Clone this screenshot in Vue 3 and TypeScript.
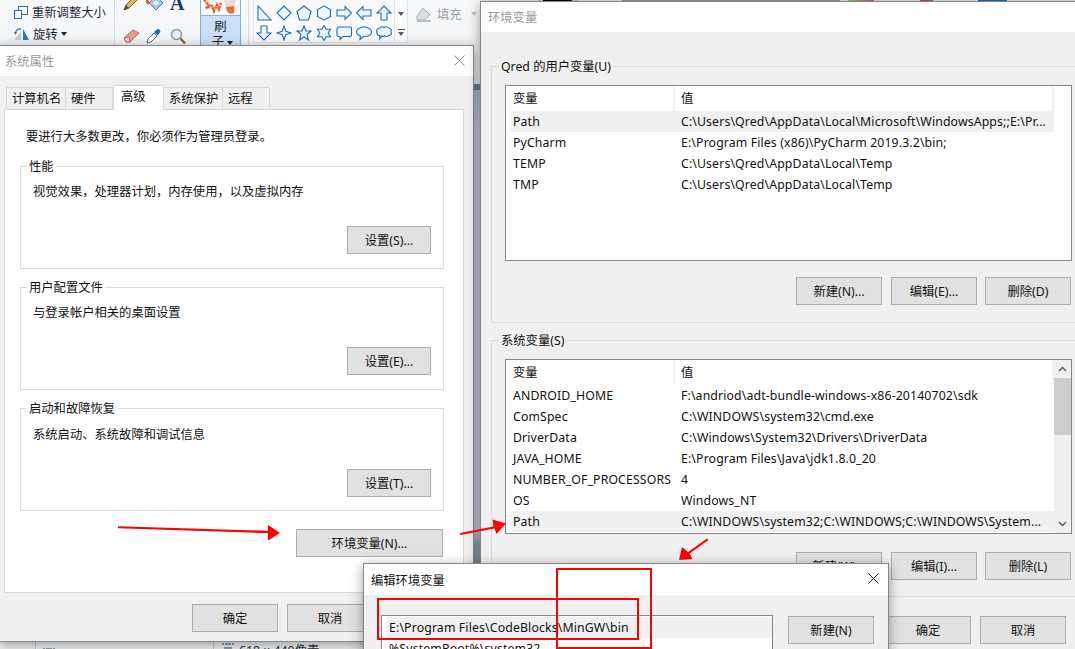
<script setup lang="ts">
interface EnvRow { name: string; value: string; selected?: boolean }

const shapes: string[] = [
  'M2 1L2 15L15 15Z',
  'M8 1L15 8L8 15L1 8Z',
  'M8 1L15 6.5L12.5 15L3.5 15L1 6.5Z',
  'M8 1L14.5 4.5V11.5L8 15L1.5 11.5V4.5Z',
  'M1 5H9V1.5L15.5 8L9 14.5V11H1Z',
  'M15 5H7V1.5L.5 8L7 14.5V11H15Z',
  'M8 1L15 8H11V15H5V8H1Z',
  'M5 1H11V8H15L8 15L1 8H5Z',
  'M8 1L9.8 6.2L15 8L9.8 9.8L8 15L6.2 9.8L1 8L6.2 6.2Z',
  'M8 1L9.9 6H15L11 9.3L12.5 15L8 11.7L3.5 15L5 9.3L1 6H6.1Z',
  'M8 .5L10.1 4.3H14.5L12.2 8L14.5 11.7H10.1L8 15.5L5.9 11.7H1.5L3.8 8L1.5 4.3H5.9Z',
  'M2.5 2H14Q15.5 2 15.5 3.5V10Q15.5 11.5 14 11.5H7L4 14.5V11.5H2.5Q1 11.5 1 10V3.5Q1 2 2.5 2Z',
  'M8 2C12 2 15.5 4 15.5 7C15.5 10 12 11.5 8 11.5H7.5L4 14.5L4.5 11C2.5 10.3 .5 9 .5 7C.5 4 4 2 8 2Z',
  'M4 3C5 1.5 7 1.5 8 2.5C9.5 1.5 11.5 1.5 12.5 3C14.5 3 15.8 5 15 6.8C16 8.5 14.8 10.5 12.8 10.3C11.8 11.7 9.8 11.8 8.8 10.8C7.8 11.6 6.5 11.6 5.8 11L3.8 14L4 10.6C2 10.8 .3 9 1 7C0 5 1.8 3 4 3Z',
]

const userRows: EnvRow[] = [
  { name: 'Path', value: 'C:\\Users\\Qred\\AppData\\Local\\Microsoft\\WindowsApps;;E:\\Pr...', selected: true },
  { name: 'PyCharm', value: 'E:\\Program Files (x86)\\PyCharm 2019.3.2\\bin;' },
  { name: 'TEMP', value: 'C:\\Users\\Qred\\AppData\\Local\\Temp' },
  { name: 'TMP', value: 'C:\\Users\\Qred\\AppData\\Local\\Temp' },
]

const systemRows: EnvRow[] = [
  { name: 'ANDROID_HOME', value: 'F:\\andriod\\adt-bundle-windows-x86-20140702\\sdk' },
  { name: 'ComSpec', value: 'C:\\WINDOWS\\system32\\cmd.exe' },
  { name: 'DriverData', value: 'C:\\Windows\\System32\\Drivers\\DriverData' },
  { name: 'JAVA_HOME', value: 'E:\\Program Files\\Java\\jdk1.8.0_20' },
  { name: 'NUMBER_OF_PROCESSORS', value: '4' },
  { name: 'OS', value: 'Windows_NT' },
  { name: 'Path', value: 'C:\\WINDOWS\\system32;C:\\WINDOWS;C:\\WINDOWS\\System...', selected: true },
]

const tabs: string[] = ['计算机名', '硬件', '高级', '系统保护', '远程']

const groups = [
  { title: '性能', text: '视觉效果，处理器计划，内存使用，以及虚拟内存', button: '设置(S)...' },
  { title: '用户配置文件', text: '与登录帐户相关的桌面设置', button: '设置(E)...' },
  { title: '启动和故障恢复', text: '系统启动、系统故障和调试信息', button: '设置(T)...' },
]
</script>

<template>
  <div class="stage">
    <header class="ribbon">
      <section class="rb-image">
        <div class="rb-line">
          <svg width="14" height="14" viewBox="0 0 14 14"><rect x="4.5" y="1.5" width="9" height="8" fill="#fff" stroke="#2a6fb0" /><rect x=".5" y="5.5" width="7" height="8" fill="#fff" stroke="#2a6fb0" /></svg>
          <span>重新调整大小</span>
        </div>
        <div class="rb-line">
          <svg width="15" height="14" viewBox="0 0 15 14"><path d="M7 13H0L7 5Z" fill="#c6cbd0" /><path d="M9 13V2L15 13Z" fill="#2a74b8" /><path d="M1.5 6C2 3 4 1.5 7 2" fill="none" stroke="#2a74b8" stroke-width="1.3" /><path d="M0 5L3 5L1.5 8Z" fill="#2a74b8" /></svg>
          <span>旋转</span>
          <i class="caret dark"></i>
        </div>
      </section>

      <section class="rb-tools">
        <svg width="16" height="16" viewBox="0 0 16 16"><path d="M1 15L3 10L12 1L15 4L6 13Z" fill="#e8b94a" stroke="#6d5a35" /><path d="M1 15L3 10L6 13Z" fill="#5a4a30" /></svg>
        <svg width="18" height="16" viewBox="0 0 18 16"><path d="M3 8L10 1L17 8L10 15Z" fill="#a9c8e8" stroke="#5e7f9f" /><path d="M7 8L10 5L13 8L10 11Z" fill="#eef4fa" /><path d="M3 9C0 6 1 3 4 1" fill="none" stroke="#e2561c" stroke-width="2.6" /></svg>
        <span class="tool-a">A</span>
        <svg width="17" height="16" viewBox="0 0 17 16"><path d="M1 10L10 2L16 5L7 14L3 14Z" fill="#ef9a93" stroke="#b56a64" /><path d="M1 10L6 9L7 14L3 14Z" fill="#e6e0dc" stroke="#b56a64" /></svg>
        <svg width="16" height="16" viewBox="0 0 16 16"><path d="M1 15L2 11L8 5L11 8L5 14Z" fill="#fff" stroke="#5b6d80" /><path d="M8 4L11 1.5C12.5 0 15.5 3 14 4.5L11.5 7.5Z" fill="#1f6cb0" /></svg>
        <svg width="16" height="17" viewBox="0 0 16 17"><circle cx="6.5" cy="6.5" r="5" fill="#e6eff7" stroke="#8b98a5" stroke-width="1.4" /><path d="M10.5 10.5L15 15.5" stroke="#8a6a3f" stroke-width="2.4" /></svg>
      </section>

      <section class="rb-brush">
        <div class="brush-top">
          <svg width="38" height="15" viewBox="0 0 38 15"><path d="M3 0L8 5L5 8L11 6L13 11L16 5L18 9L20 3" fill="none" stroke="#e8622a" stroke-width="2.6" stroke-dasharray="2.4 .8" /><path d="M23 0H35L33 13Q28 15 25 11Z" fill="#e4dfda" /><path d="M25 7L33 6L33 13Q28 15 26 11Z" fill="#ea6a32" /></svg>
        </div>
        <div class="brush-btn"><span>刷</span><span class="brush-z">子<i class="caret dark small"></i></span></div>
      </section>

      <div class="rb-sep"></div>

      <section class="rb-gallery">
        <div class="shape-grid">
          <svg v-for="d in shapes" :key="d" width="16" height="16" viewBox="0 0 16 16"><path :d="d" fill="#eef5fc" stroke="#1f70b5" stroke-width="1.1" /></svg>
        </div>
        <div class="gallery-scroll">
          <i class="caret slate"></i>
          <div class="more"><b></b><i class="caret slate"></i></div>
        </div>
      </section>

      <section class="rb-fill">
        <svg width="16" height="16" viewBox="0 0 16 16"><path d="M1 10L7 2L14 9L8 14H1Z" fill="#d9dde2" stroke="#a7adb4" /><path d="M1 15H15" stroke="#b9bec4" stroke-width="2" /></svg>
        <span>填充</span>
        <i class="caret pale"></i>
      </section>

      <div class="palette"></div>
    </header>

    <div class="ribbon-edge"></div>
    <div class="canvas"></div>

    <footer class="status">
      <div class="st-cell st-a"></div>
      <div class="st-cell st-b">
        <svg width="12" height="8" viewBox="0 0 12 8"><path d="M0 1H2M10 1H12M3 1H9M2 5H10" stroke="#3d4a57" /></svg>
      </div>
      <div class="st-cell st-c">
        <svg width="12" height="8" viewBox="0 0 12 8"><path d="M0 1H2M10 1H12M3 1H9M2 5H10" stroke="#3d4a57" /></svg>
        <span>618 × 440像素</span>
      </div>
    </footer>

    <!-- 系统属性 -->
    <div class="win win-props">
      <div class="title muted">
        <span>系统属性</span>
        <svg class="close" width="11" height="11" viewBox="0 0 11 11"><path d="M.5 .5L10.5 10.5M10.5 .5L.5 10.5" stroke="#8d8d8d" /></svg>
      </div>
      <div class="props-body">
        <div class="tabs">
          <div v-for="t in tabs" :key="t" class="tab" :class="[{ active: t === '高级' }, 'tab-' + t.length]">{{ t }}</div>
        </div>
        <div class="panel">
          <p class="notice">要进行大多数更改，你必须作为管理员登录。</p>
          <div v-for="g in groups" :key="g.title" class="pgroup">
            <span class="legend">{{ g.title }}</span>
            <p class="gtext">{{ g.text }}</p>
            <button class="btn set">{{ g.button }}</button>
          </div>
          <button class="btn envbtn">环境变量(N)...</button>
        </div>
        <div class="foot props-foot">
          <button class="btn w86">确定</button>
          <button class="btn w86">取消</button>
        </div>
      </div>
    </div>

    <!-- 环境变量 -->
    <div class="win win-env">
      <div class="title muted"><span>环境变量</span></div>
      <div class="env-body">
        <div class="egroup">
          <span class="legend e-legend">Qred 的用户变量(U)</span>
          <div class="list list-user">
            <div class="list-main">
              <div class="lhead"><div class="c1">变量</div><div class="c2">值</div></div>
              <div v-for="r in userRows" :key="r.name" class="lrow" :class="{ sel: r.selected }">
                <div class="c1">{{ r.name }}</div><div class="c2">{{ r.value }}</div>
              </div>
            </div>
          </div>
          <div class="ebtns">
            <button class="btn w86">新建(N)...</button>
            <button class="btn w86">编辑(E)...</button>
            <button class="btn w86">删除(D)</button>
          </div>
        </div>
        <div class="egroup second">
          <span class="legend e-legend">系统变量(S)</span>
          <div class="list list-sys">
            <div class="list-main">
              <div class="lhead"><div class="c1">变量</div><div class="c2">值</div></div>
              <div v-for="r in systemRows" :key="r.name" class="lrow" :class="{ sel: r.selected }">
                <div class="c1">{{ r.name }}</div><div class="c2">{{ r.value }}</div>
              </div>
            </div>
            <div class="vscroll">
              <svg width="17" height="18" viewBox="0 0 17 18"><path d="M5 11L8.5 7.5L12 11" fill="none" stroke="#555" stroke-width="1.4" /></svg>
              <div class="thumb"></div>
              <svg class="sc-down" width="17" height="18" viewBox="0 0 17 18"><path d="M5 7L8.5 10.5L12 7" fill="none" stroke="#555" stroke-width="1.4" /></svg>
            </div>
          </div>
          <div class="ebtns">
            <button class="btn w86">新建(W)...</button>
            <button class="btn w86">编辑(I)...</button>
            <button class="btn w86">删除(L)</button>
          </div>
        </div>
        <div class="foot env-foot">
          <button class="btn w86">确定</button>
          <button class="btn w86">取消</button>
        </div>
      </div>
    </div>

    <!-- 编辑环境变量 -->
    <div class="win win-edit">
      <div class="title edit-title">
        <span>编辑环境变量</span>
        <svg class="close" width="11" height="11" viewBox="0 0 11 11"><path d="M.5 .5L10.5 10.5M10.5 .5L.5 10.5" stroke="#222" /></svg>
      </div>
      <div class="edit-body">
        <div class="edit-list">
          <div class="edit-row sel">E:\Program Files\CodeBlocks\MinGW\bin</div>
          <div class="edit-row">%SystemRoot%\system32</div>
        </div>
        <button class="btn w86 edit-new">新建(N)</button>
      </div>
    </div>

    <!-- 批注 -->
    <svg class="notes" width="1075" height="649" viewBox="0 0 1075 649">
      <g fill="#f00" stroke="none">
        <path d="M118 526.2L268 530.8V525L280 533L268 540.5V533.2L118 528.2Z" />
        <path d="M460 533L493.5 526.5L492.5 519.5L506 523.5L496.5 534L494.5 528.5L460.5 535Z" />
        <path d="M707 538.5L708.5 540L689.5 553.5L692.5 559L679 560L682 547L688 552Z" />
      </g>
      <g fill="none" stroke="#f00" stroke-width="2">
        <rect x="378" y="599" width="260" height="40" />
        <rect x="557" y="569" width="94" height="79" />
      </g>
    </svg>
  </div>
</template>

<style scoped>
.stage {
  position: relative;
  width: 1075px;
  height: 649px;
  overflow: hidden;
  display: flex;
  flex-direction: column;
  background: #c9ced6;
  font-family: "Noto Sans", "Noto Sans CJK SC", sans-serif;
  font-size: 12.3px;
  color: #111;
}
p { margin: 0; }

/* ribbon */
.ribbon {
  display: flex;
  height: 84px;
  flex: none;
  background: linear-gradient(#f8f9fa, #eff1f4);
  overflow: hidden;
}
.rb-image {
  width: 115px;
  flex: none;
  padding: 1px 0 0 14px;
  box-sizing: border-box;
  border-right: 1px solid #d8dce1;
  height: 45px;
}
.rb-line {
  display: flex;
  align-items: center;
  gap: 3px;
  height: 22px;
  color: #1c2a3a;
}
.rb-line span { margin-left: 1px; }
.rb-tools {
  width: 83px;
  flex: none;
  padding: 0 0 0 8px;
  box-sizing: border-box;
  display: grid;
  grid-template-columns: 23px 24px 20px;
  grid-auto-rows: 16px;
  row-gap: 17px;
  margin-top: -5px;
  align-items: center;
}
.tool-a {
  font-family: "Liberation Serif", serif;
  font-weight: 700;
  font-size: 20px;
  line-height: 16px;
  color: #1f3a5f;
}
.rb-brush {
  width: 41px;
  flex: none;
  margin-left: 2px;
  height: 46px;
  box-sizing: border-box;
  border: 1px solid #7fb0e4;
  border-top: 0;
  background: #c9e0f7;
  display: flex;
  flex-direction: column;
  overflow: hidden;
}
.brush-top {
  height: 16px;
  flex: none;
  box-sizing: border-box;
  background: #fbfbfb;
  border-bottom: 1px solid #7fb0e4;
  overflow: hidden;
}
.brush-btn {
  flex: none;
  display: flex;
  flex-direction: column;
  align-items: center;
  line-height: 15px;
  padding-top: 3px;
  color: #222;
}
.brush-z { position: relative; margin-left: -5px; }
.brush-z .small { position: absolute; left: 15px; top: 7px; }
.rb-sep {
  width: 1px;
  height: 45px;
  flex: none;
  margin-left: 7px;
  background: #d8dce1;
}
.rb-gallery {
  margin-left: 4px;
  width: 155px;
  height: 43px;
  flex: none;
  box-sizing: border-box;
  border: 1px solid #dfe3e8;
  border-top: 0;
  background: #f9fafb;
  display: flex;
}
.shape-grid {
  width: 141px;
  box-sizing: border-box;
  padding: 5px 0 0 0;
  display: grid;
  grid-template-columns: repeat(7, 20px);
  grid-auto-rows: 20px;
  justify-items: center;
  border-right: 1px solid #dfe3e8;
}
.shape-grid svg { display: block; }
.gallery-scroll {
  flex: 1;
  display: flex;
  flex-direction: column;
  align-items: center;
  padding-top: 12px;
}
.more { margin-top: 13px; display: flex; flex-direction: column; align-items: center; gap: 2px; }
.more b { display: block; width: 7px; height: 1px; background: #4b5a6a; }
.rb-fill {
  width: 72px;
  flex: none;
  height: 28px;
  display: flex;
  align-items: center;
  gap: 5px;
  padding-left: 8px;
  box-sizing: border-box;
  color: #a0a3a8;
}
.rb-fill .caret { margin-left: 4px; }
.palette {
  flex: 1;
  height: 1px;
  background: linear-gradient(to right,
    #e6e6e6 57px, #a9c8e6 57px, #a9c8e6 63px, #000 63px, #000 92px, #a9c8e6 92px, #a9c8e6 98px,
    #e6e6e6 98px, #e6e6e6 142px, #979797 142px, #979797 360px, #e6e6e6 360px, #e6e6e6 368px,
    #7d7 368px, #c56 394px, #e6e6e6 394px, #e6e6e6 440px, #b0459d 440px, #b0459d 453px,
    #e6e6e6 453px, #e6e6e6 498px, #0f6cbd 498px, #0f6cbd 527px, #e6e6e6 527px);
}
.caret {
  display: block;
  width: 0;
  height: 0;
  border-left: 3.5px solid transparent;
  border-right: 3.5px solid transparent;
  border-top: 4px solid #222;
}
.caret.slate { border-top-color: #4b5a6a; }
.caret.pale { border-top-color: #c3c6ca; }
.ribbon-edge {
  height: 6px;
  flex: none;
  background: #76838f;
}
.canvas {
  flex: 1;
  background: linear-gradient(#b9c0c9 0, #cdd2d9 40px, #cdd2d9 440px, #98a2ac 455px);
}
.status {
  height: 17px;
  flex: none;
  display: flex;
  background: #f1f2f4;
  overflow: hidden;
}
.st-cell { border-right: 1px solid #c9ccd1; height: 17px; box-sizing: border-box; padding-top: 11px; }
.st-a { width: 36px; }
.st-b { width: 178px; padding-left: 7px; }
.st-c { width: 200px; padding-left: 8px; display: flex; gap: 5px; }
.st-c span { line-height: 12px; margin-top: 2px; white-space: nowrap; color: #2a3440; }

/* windows */
.win {
  position: absolute;
  box-sizing: border-box;
  border: 1px solid #868686;
  background: #f0f0f0;
  box-shadow: 0 3px 12px rgba(0, 0, 0, .38);
}
.title {
  position: relative;
  height: 30px;
  background: #fff;
  display: flex;
  align-items: center;
  padding-left: 5px;
}
.muted { color: #9a9a9a; }
.close { position: absolute; right: 9px; top: 9px; }
.btn {
  display: block;
  height: 28px;
  box-sizing: border-box;
  border: 1px solid #adadad;
  background: #e1e1e1;
  font: inherit;
  color: #111;
  padding: 0;
  text-align: center;
}
.w86 { width: 86px; }
.legend {
  display: block;
  width: fit-content;
  line-height: 18px;
  padding: 0 2px;
}

/* system properties */
.win-props { left: -1px; top: 45px; width: 475px; height: 597px; }
.win-props .close { right: 8px; top: 9px; }
.props-body { padding: 11px 0 0 4px; }
.tabs { display: flex; align-items: flex-end; height: 22px; padding-left: 2px; }
.tab {
  height: 22px;
  box-sizing: border-box;
  border: 1px solid #d9d9d9;
  border-bottom: 0;
  margin-right: -1px;
  line-height: 22px;
  padding-left: 5px;
  background: #f0f0f0;
}
.tab-4 { width: 60px; }
.tab-2 { width: 48px; }
.tab.active {
  position: relative;
  z-index: 1;
  width: 51px;
  height: 25px;
  margin-bottom: -1px;
  margin-left: 1px;
  background: #fff;
  padding-left: 7px;
}
.panel {
  width: 460px;
  height: 484px;
  box-sizing: border-box;
  background: #fff;
  border: 1px solid #d9d9d9;
  padding: 17px 19px 0 15px;
  display: flex;
  flex-direction: column;
}
.notice { line-height: 20px; margin-left: 6px; }
.pgroup {
  height: 103px;
  box-sizing: border-box;
  margin-top: 18px;
  border: 1px solid #dcdcdc;
  display: flex;
  flex-direction: column;
  padding: 0 12px 14px 12px;
  background: #fff;
}
.notice + .pgroup { margin-top: 19px; }
.pgroup:nth-of-type(3) { padding-bottom: 13px; }
.pgroup:nth-of-type(3) .gtext { margin-top: 7px; }
.pgroup .legend {
  margin: -9px 0 0 -6px;
  background: #fff;
}
.gtext { line-height: 20px; margin-top: 6px; }
.set { width: 84px; margin-top: auto; align-self: flex-end; }
.envbtn { width: 147px; margin: 18px 1px 0 0; align-self: flex-end; }
.foot { display: flex; gap: 9px; }
.props-foot { margin-top: 11px; justify-content: flex-end; padding-right: 100px; }

/* environment variables */
.win-env { left: 480px; top: 1px; width: 604px; height: 660px; }
.win-env .title { padding-left: 7px; }
.env-body { padding: 34px 0 0 10px; }
.egroup {
  height: 257px;
  box-sizing: border-box;
  border: 1px solid #dcdcdc;
  padding: 0 0 0 13px;
}
.egroup.second { margin-top: 17px; }
.e-legend {
  margin: -9px 0 0 -6px;
  background: #f0f0f0;
}
.list {
  margin-top: 9px;
  width: 567px;
  box-sizing: border-box;
  border: 1px solid #82878f;
  background: #fff;
  display: flex;
  padding-left: 5px;
}
.list-user { height: 176px; }
.list-sys { height: 175px; }
.list-main { width: 543px; flex: none; }
.lhead {
  display: flex;
  height: 25px;
  line-height: 26px;
}
.lhead .c1 { width: 164px; border-right: 2px solid #f2f2f2; }
.lhead .c2 { padding-left: 6px; border-right: 2px solid #f2f2f2; }
.lrow { display: flex; height: 21px; line-height: 21px; letter-spacing: .12px; }
.lrow.sel { background: #f0f0f0; }
.c1 { width: 163px; flex: none; box-sizing: border-box; padding-left: 2px; white-space: nowrap; overflow: hidden; }
.c2 { flex: 1; box-sizing: border-box; padding-left: 7px; white-space: nowrap; overflow: hidden; }
.vscroll {
  width: 17px;
  flex: none;
  background: #f0f0f0;
  display: flex;
  flex-direction: column;
  height: 173px;
}
.thumb { height: 57px; background: #cdcdcd; }
.sc-down { margin-top: auto; }
.ebtns {
  display: flex;
  gap: 8px;
  margin: 16px 0 0 291px;
}
.second .ebtns { margin-top: 18px; }
.ebtns .btn:nth-child(2) { margin-left: 1px; }
.env-foot { margin-top: 19px; padding-left: 394px; }

/* edit dialog */
.win-edit { left: 363px; top: 563px; width: 526px; height: 100px; }
.edit-title { height: 31px; color: #111; padding-left: 7px; }
.edit-body { display: flex; padding: 20px 0 0 17px; }
.edit-list {
  width: 392px;
  height: 60px;
  box-sizing: border-box;
  border: 1px solid #82878f;
  background: #fff;
  padding: 1px 0 0 5px;
  flex: none;
}
.edit-row { height: 21px; line-height: 21px; padding-left: 2px; letter-spacing: .13px; }
.edit-row.sel { background: #f0f0f0; }
.edit-new { margin: 1px 0 0 15px; }

/* annotations */
.notes { position: absolute; left: 0; top: 0; pointer-events: none; }
</style>
